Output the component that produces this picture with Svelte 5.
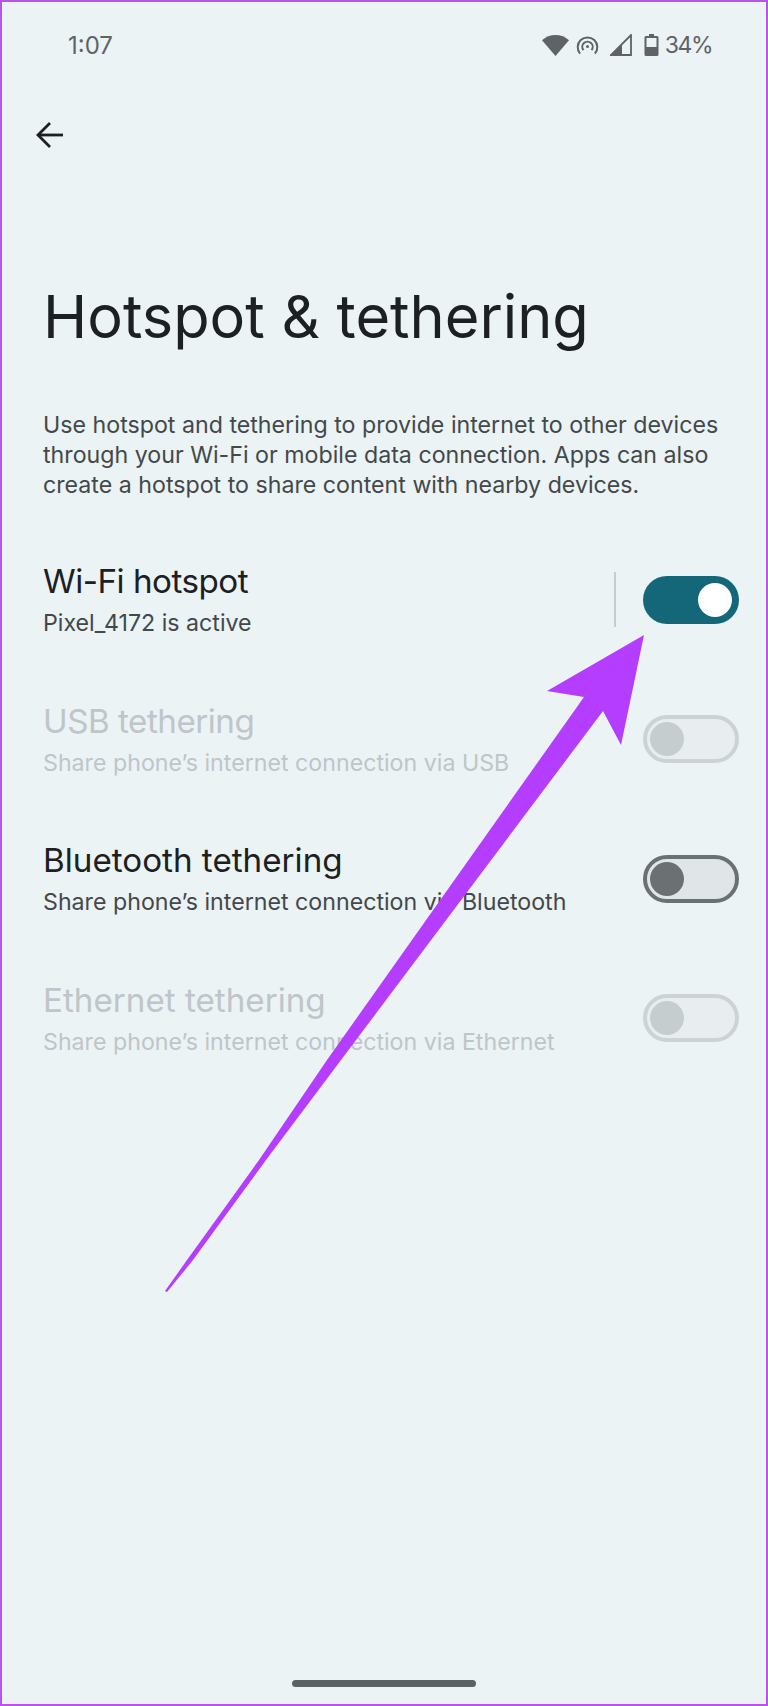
<script>
  const rows = [
    { title: 'Wi-Fi hotspot', sub: 'Pixel_4172 is active', state: 'on', divider: true, tight: true },
    { title: 'USB tethering', sub: 'Share phone’s internet connection via USB', state: 'disabled', tight: true },
    { title: 'Bluetooth tethering', sub: 'Share phone’s internet connection via Bluetooth', state: 'off' },
    { title: 'Ethernet tethering', sub: 'Share phone’s internet connection via Ethernet', state: 'disabled' }
  ];
</script>

<div class="screen">
  <header class="status">
    <span class="time">1:07</span>
    <div class="status-right">
      <svg class="ic-wifi" viewBox="0.5 0.8 25 18.700" width="27" height="21" preserveAspectRatio="none"><path d="M13 19.5 0.5 5.5C4 2.4 8.3.8 13 .8s9 1.6 12.500 4.700z" fill="#5f6368"/></svg>
      <svg class="ic-hot" viewBox="0 0 22 20" width="23" height="20" fill="none" stroke="#5f6368" stroke-width="2"><path d="M3.600 18.600A9.800 9.800 0 1 1 18.400 18.600"/><path d="M7 15.200A5.200 5.200 0 1 1 15 15.200"/><circle cx="11" cy="11.500" r="1.500" fill="#5f6368" stroke="none"/></svg>
      <svg class="ic-sig" viewBox="0 0 22 22" width="22" height="22"><path d="M21 1V21H1Z" fill="none" stroke="#5f6368" stroke-width="1.800"/><path d="M12 10.500V21H1Z" fill="#5f6368"/></svg>
      <svg class="ic-bat" viewBox="0 0 14 22" width="15" height="22"><path d="M4.500 0h5v2h3a1.500 1.500 0 0 1 1.500 1.500v17a1.500 1.500 0 0 1-1.500 1.500h-11A1.500 1.500 0 0 1 0 20.500v-17A1.500 1.500 0 0 1 1.500 2h3z" fill="#5f6368"/><rect x="2" y="4" width="10" height="9" fill="#ebf3f5"/></svg>
      <span class="pct">34%</span>
    </div>
  </header>

  <div class="back">
    <svg viewBox="0 0 28 28" width="28" height="28" fill="none" stroke="#1c2022" stroke-width="2.800"><path d="M28 14H3"/><path d="M15 2 3 14l12 12"/></svg>
  </div>

  <h1>Hotspot &amp; tethering</h1>

  <p class="intro">Use hotspot and tethering to provide internet to other devices through your Wi-Fi or mobile data connection. Apps can also create a hotspot to share content with nearby devices.</p>

  <div class="list">
    {#each rows as r}
      <div class="row {r.state}">
        <div class="text">
          <div class="title" class:tight={r.tight}>{r.title}</div>
          <div class="sub">{r.sub}</div>
        </div>
        {#if r.divider}<span class="divider"></span>{/if}
        <span class="switch"><span class="thumb"></span></span>
      </div>
    {/each}
  </div>

  <div class="handle"></div>

  <svg class="arrow" viewBox="0 0 768 1706" width="768" height="1706">
    <path d="M644 635 547 691 584 697 327 1060 259 1160 187 1260 165 1291 167 1292 193 1260 266 1160 341 1060 603 711 621 745Z" fill="#b53dff"/>
  </svg>
</div>

<style>
  :global(body) { margin: 0; }
  .screen {
    position: relative;
    box-sizing: border-box;
    width: 768px;
    height: 1706px;
    background: #ebf3f5;
    border: 2px solid #b654f0;
    font-family: Inter, sans-serif;
    overflow: hidden;
  }
  .status {
    display: flex;
    justify-content: space-between;
    align-items: center;
    height: 40px;
    margin-top: 23px;
    padding: 0 54px 0 66px;
    color: #5f6368;
    font-size: 24px;
  }
  .time { line-height: 40px; margin-top: 1px; }
  .status-right { display: flex; align-items: center; gap: 7px; }
  .ic-sig { margin-left: 4px; }
  .ic-bat { margin-left: 5px; }
  .pct { line-height: 40px; font-size: 23px; letter-spacing: -1.500px; margin-left: -1px; }
  .back { margin: 56px 0 0 33px; height: 28px; }
  h1 {
    margin: 129px 0 0 41px;
    font-weight: 400;
    font-size: 59.500px;
    line-height: 76px;
    color: #1c2022;
    letter-spacing: 0;
  }
  .intro {
    margin: 56px 30px 0 41px;
    font-size: 23.200px;
    line-height: 30px;
    color: #43484b;
  }
  .list { margin-top: 30px; padding: 0 27px 0 41px; display: flex; flex-direction: column; }
  .row { display: flex; align-items: center; height: 139.500px; }
  .text { flex: 1; min-width: 0; padding-top: 2px; }
  .title { font-size: 33.200px; line-height: 44px; color: #1c2022; }
  .tight { letter-spacing: -0.500px; }
  .sub { font-size: 23.200px; line-height: 37px; margin-top: 2px; color: #43484b; white-space: nowrap; }
  .divider { width: 2px; height: 55px; background: #c6cdcf; margin-right: 27px; }
  .switch {
    box-sizing: border-box;
    position: relative;
    display: flex;
    align-items: center;
    width: 96px;
    height: 48px;
    border-radius: 24px;
  }
  .on .switch { background: #146778; justify-content: flex-end; padding-right: 7px; }
  .on .thumb { background: #fff; }
  .off .switch { background: #e0e5e8; border: 4px solid #6b7173; padding-left: 3px; }
  .off .thumb { background: #6b7173; }
  .disabled .switch { background: #e8edef; border: 4px solid #cdd3d5; padding-left: 3px; }
  .disabled .thumb { background: #c6cdcf; }
  .thumb { width: 34px; height: 34px; border-radius: 50%; }
  .disabled .title, .disabled .sub { color: #bfc5c8; }
  .handle {
    position: absolute;
    left: 290px;
    top: 1678px;
    width: 184px;
    height: 7px;
    border-radius: 4px;
    background: #5c6164;
  }
  .arrow { position: absolute; left: -2px; top: -2px; pointer-events: none; }
</style>
